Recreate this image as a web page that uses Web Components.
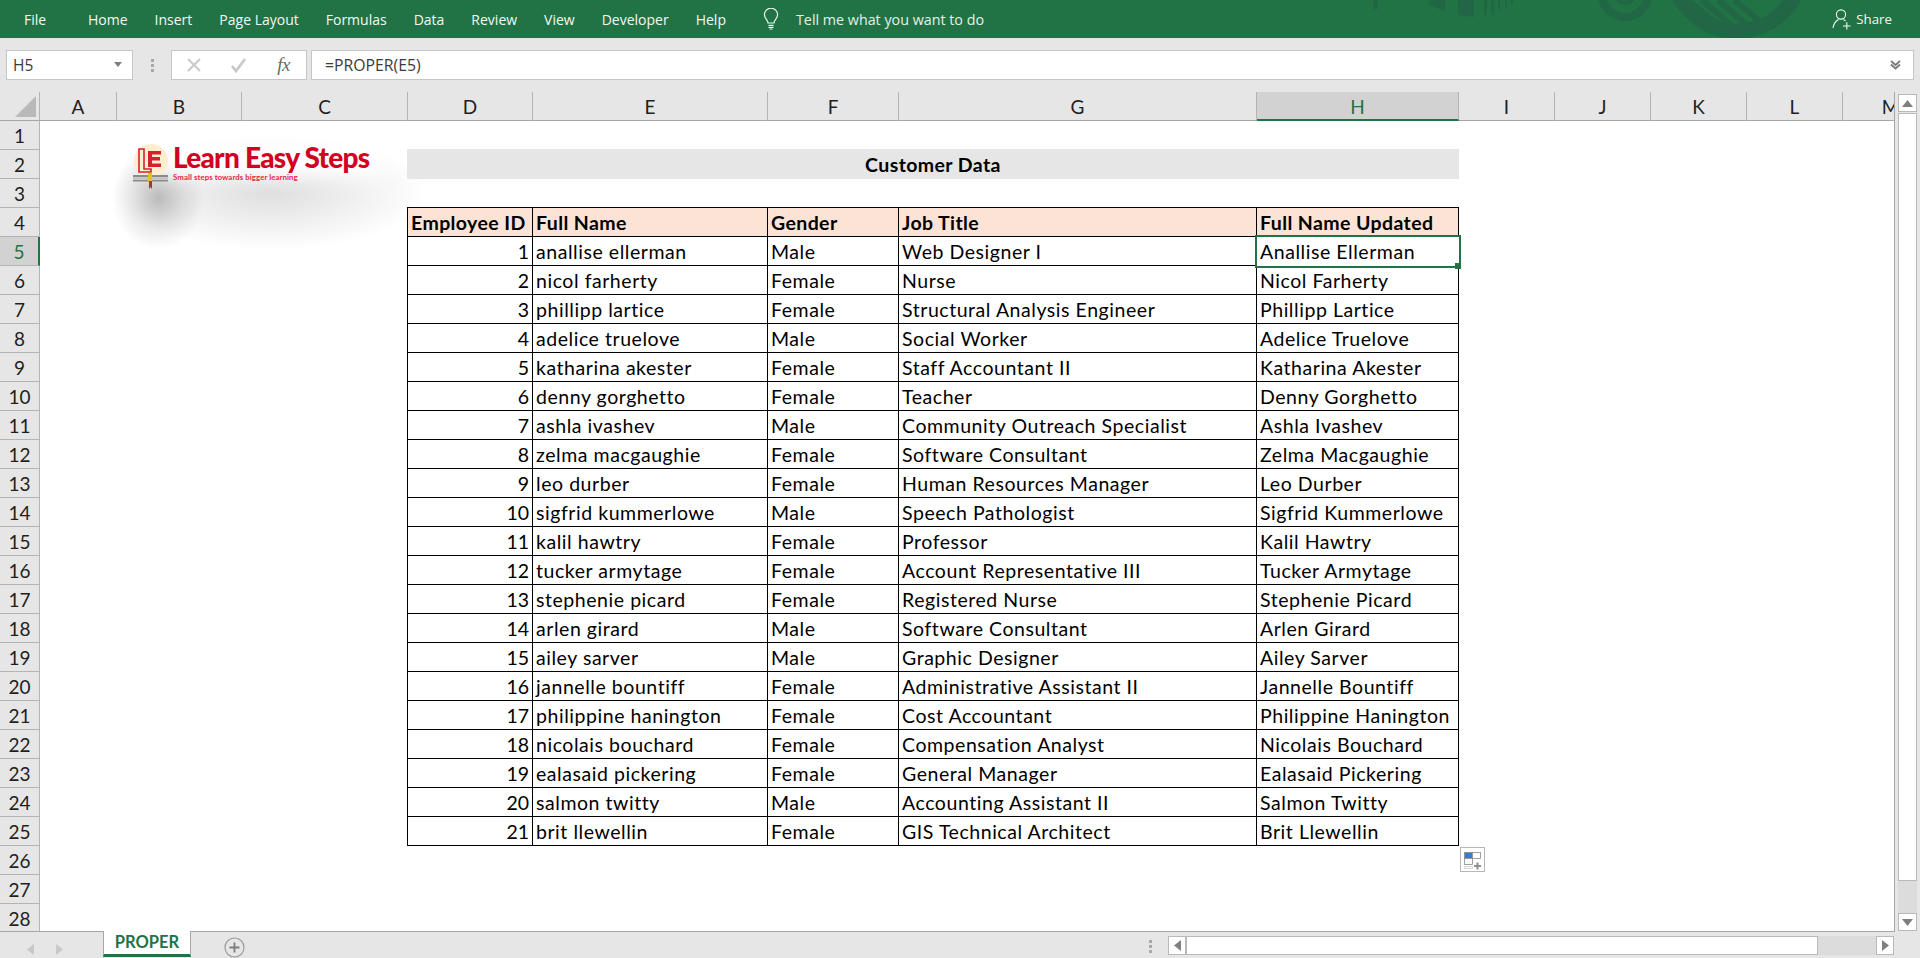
<!DOCTYPE html>
<html lang="en"><head><meta charset="utf-8"><title>PROPER</title>
<style>
html,body{margin:0;padding:0;height:100%;overflow:hidden;background:#e6e6e6}
body{font-family:"Lato","Liberation Sans",sans-serif;font-variant-ligatures:none}
x-app{height:958px}
</style></head><body>
<x-app>
  <x-ribbon slot="ribbon">
    <x-tab>File</x-tab>
    <x-tab slot="tabs">Home</x-tab><x-tab slot="tabs">Insert</x-tab><x-tab slot="tabs">Page Layout</x-tab><x-tab slot="tabs">Formulas</x-tab><x-tab slot="tabs">Data</x-tab><x-tab slot="tabs">Review</x-tab><x-tab slot="tabs">View</x-tab><x-tab slot="tabs">Developer</x-tab><x-tab slot="tabs">Help</x-tab>
  </x-ribbon>
  <x-formula-bar slot="formula" cell="H5" formula="=PROPER(E5)"></x-formula-bar>
  <x-sheet slot="sheet"></x-sheet>
  <x-status slot="status" sheet="PROPER"></x-status>
</x-app>
<script>
const def=(n,html,extra={})=>{
  customElements.define(n,class extends HTMLElement{
    connectedCallback(){
      if(this.shadowRoot)return;
      const r=this.attachShadow({mode:'open'});
      r.innerHTML=typeof html==='function'?html(this):html;
      if(extra.init)extra.init(this,r);
    }
  });
};

def('x-app',`<style>:host{display:flex;flex-direction:column;width:1920px;overflow:hidden}</style>
<slot name="ribbon"></slot><slot name="formula"></slot><slot name="sheet"></slot><slot name="status"></slot>`);

def('x-tab',`<style>:host{display:block;font:14px/37px "Open Sans","Liberation Sans",sans-serif;color:#f4f8f5;white-space:nowrap}</style><slot></slot>`);

def('x-ribbon',`<style>
:host{display:flex;position:relative;height:38px;background:#217346;align-items:center;overflow:hidden;flex:none}
.file{width:88px;padding-left:24px;box-sizing:border-box;flex:none}
.tabs{display:flex;gap:27px;flex:none}
.tell{display:flex;align-items:center;margin-left:37px;font:14.300px/37px "Open Sans",sans-serif;color:#e6efe9}
.tell svg{margin-right:17px;display:block}
.share{margin-left:auto;display:flex;align-items:center;gap:5px;padding-right:28px;font:13.300px/39px "Open Sans",sans-serif;color:#f4f8f5;position:relative}
.deco{position:absolute;left:1340px;top:0;width:500px;height:38px}
</style>
<svg class="deco" viewBox="0 0 500 38" aria-hidden="true">
 <g fill="#216645">
  <rect x="33" y="0" width="5" height="9"/>
  <path d="M89 0h16v11l-16-6z"/>
  <path d="M118 0h16v17l-16-2z"/>
  <rect x="144" y="0" width="3" height="15"/><rect x="151" y="0" width="3" height="13"/><rect x="158" y="0" width="2" height="10"/><rect x="165" y="0" width="2" height="8"/><rect x="171" y="0" width="2" height="4"/>
 </g>
 <circle cx="285" cy="-6" r="23" fill="none" stroke="#216645" stroke-width="8"/>
 <circle cx="285" cy="-6" r="9" fill="none" stroke="#216645" stroke-width="4"/>
 <circle cx="397" cy="-34" r="65" fill="none" stroke="#216645" stroke-width="15"/>
 <g stroke="#216645" stroke-width="6" fill="none">
  <path d="M347 0l34 27M362 0l32 28M378 0l30 26M394 0l28 23"/>
 </g>
</svg>
<div class="file"><slot></slot></div>
<div class="tabs"><slot name="tabs"></slot></div>
<div class="tell">
 <svg width="16" height="22" viewBox="0 0 16 22" fill="none" stroke="#eef4f0" stroke-width="1.2"><path d="M5 15c0-3-3.600-4.400-3.600-8.200A6.600 6.600 0 0 1 14.600 6.800C14.600 10.600 11 12 11 15z"/><path d="M5.500 17.300h5M5.500 19.300h5M6.500 21h3"/></svg>
 <span>Tell me what you want to do</span>
</div>
<div class="share">
 <svg width="19" height="22" viewBox="0 0 19 22" fill="none" stroke="#f2f6f3" stroke-width="1.1"><circle cx="9" cy="6.500" r="4.600"/><path d="M1 20c.6-4.300 2.700-7 5.500-8.500M11.500 11.500c.8.400 1.500 1 2.100 1.600"/><path d="M11 18h7.500M14.800 14.200V21.500"/></svg>
 <span>Share</span>
</div>`);

def('x-formula-bar',h=>`<style>
:host{display:flex;height:54px;box-sizing:border-box;padding:12px 6px 12px 6px;background:#e6e6e6;flex:none}
.box{background:#fff;border:1px solid #c6c6c6;box-sizing:border-box;height:30px;display:flex;align-items:center}
.name{width:127px;padding:0 9px 0 6px;font:15.500px "Open Sans",sans-serif;color:#3c3c3c;justify-content:space-between}
.dots{width:38px;display:flex;flex-direction:column;align-items:center;justify-content:center;gap:2px}
.dots i{width:3px;height:3px;background:#a9a9a9;display:block}
.btns{width:136px;display:grid;grid-template-columns:1fr 1fr 1fr;place-items:center;padding:0;color:#c8c8c8}
.fx{font:italic 19px "Liberation Serif",serif;color:#6a6a6a;letter-spacing:-.5px}
.formula{flex:1;margin-left:4px;padding:0 12px 0 13px;font:15.800px "Open Sans",sans-serif;color:#3c3c3c;justify-content:space-between}
</style>
<div class="box name"><span>${h.getAttribute('cell')}</span><svg width="10" height="6" viewBox="0 0 10 6"><path d="M1 0h8L5 5z" fill="#7e7e7e"/></svg></div>
<div class="dots"><i></i><i></i><i></i></div>
<div class="box btns">
 <svg width="16" height="16" viewBox="0 0 16 16" stroke="#c9c9c9" stroke-width="2" fill="none"><path d="M2 2l12 12M14 2L2 14"/></svg>
 <svg width="17" height="16" viewBox="0 0 17 16" stroke="#c9c9c9" stroke-width="2.800" fill="none"><path d="M2 9l4 5L15 2"/></svg>
 <span class="fx">fx</span>
</div>
<div class="box formula"><span>${h.getAttribute('formula')}</span><svg width="11" height="10" viewBox="0 0 11 10" stroke="#7a7a7a" stroke-width="1.800" fill="none"><path d="M1 1l4.500 4L10 1M1 4.500l4.500 4 4.500-4"/></svg></div>`);

const DATA=[
["anallise ellerman","Male","Web Designer I","Anallise Ellerman"],
["nicol farherty","Female","Nurse","Nicol Farherty"],
["phillipp lartice","Female","Structural Analysis Engineer","Phillipp Lartice"],
["adelice truelove","Male","Social Worker","Adelice Truelove"],
["katharina akester","Female","Staff Accountant II","Katharina Akester"],
["denny gorghetto","Female","Teacher","Denny Gorghetto"],
["ashla ivashev","Male","Community Outreach Specialist","Ashla Ivashev"],
["zelma macgaughie","Female","Software Consultant","Zelma Macgaughie"],
["leo durber","Female","Human Resources Manager","Leo Durber"],
["sigfrid kummerlowe","Male","Speech Pathologist","Sigfrid Kummerlowe"],
["kalil hawtry","Female","Professor","Kalil Hawtry"],
["tucker armytage","Female","Account Representative III","Tucker Armytage"],
["stephenie picard","Female","Registered Nurse","Stephenie Picard"],
["arlen girard","Male","Software Consultant","Arlen Girard"],
["ailey sarver","Male","Graphic Designer","Ailey Sarver"],
["jannelle bountiff","Female","Administrative Assistant II","Jannelle Bountiff"],
["philippine hanington","Female","Cost Accountant","Philippine Hanington"],
["nicolais bouchard","Female","Compensation Analyst","Nicolais Bouchard"],
["ealasaid pickering","Female","General Manager","Ealasaid Pickering"],
["salmon twitty","Male","Accounting Assistant II","Salmon Twitty"],
["brit llewellin","Female","GIS Technical Architect","Brit Llewellin"]];

def('x-col-headers',()=>{
 const cols=[['A',77],['B',125],['C',166],['D',125],['E',235],['F',131],['G',358],['H',202],['I',96],['J',96],['K',96],['L',96],['M',96]];
 return `<style>
:host{display:flex;height:29px;box-sizing:border-box;flex:none;background:#e6e6e6}
.corner{width:40px;flex:none;box-sizing:border-box;border-right:1px solid #b4b4b4;border-bottom:1px solid #a6a6a6;display:flex;align-items:flex-end;justify-content:flex-end;padding:0 3px 3px 0}
.c{flex:none;box-sizing:border-box;border-right:1px solid #b4b4b4;border-bottom:1px solid #a6a6a6;text-align:center;font-size:19px;line-height:30px;color:#1f1f1f}
.sel{background:#d2d2d2;color:#217346;border-bottom:2px solid #217346}
</style><div class="corner"><svg width="21" height="21" viewBox="0 0 21 21"><path d="M21 0v21H0z" fill="#b9b9b9"/></svg></div>`+
 cols.map(([n,w])=>`<div class="c${n==='H'?' sel':''}" style="width:${w}px">${n}</div>`).join('');
});

def('x-row-headers',()=>{
 let s=`<style>
:host{display:block;width:40px;flex:none;background:#e6e6e6}
.r{height:29px;box-sizing:border-box;border-right:1px solid #b4b4b4;border-bottom:1px solid #b4b4b4;text-align:center;font-size:19px;line-height:29px;color:#1f1f1f}
.sel{background:#d2d2d2;color:#217346;border-right:2px solid #217346}
</style>`;
 for(let i=1;i<=28;i++)s+=`<div class="r${i===5?' sel':''}">${i}</div>`;
 return s;
});

def('x-logo',`<style>
:host{position:absolute;left:70px;top:9px;width:320px;height:124px;display:block;pointer-events:none}
.shade{position:absolute;inset:0;background:
 radial-gradient(ellipse 46px 52px at 48px 68px,rgba(0,0,0,.24),rgba(0,0,0,.09) 55%,rgba(0,0,0,0) 100%),
 radial-gradient(ellipse 158px 58px at 160px 62px,rgba(0,0,0,.13),rgba(0,0,0,.06) 55%,rgba(0,0,0,0) 100%)}
.plate{position:absolute;left:46px;top:10px;width:225px;height:36px;background:#fff;filter:blur(9px);opacity:.9}
svg{position:absolute;left:22px;top:13px}
.name{position:absolute;left:63px;top:13px;font:900 28px/28px "Lato",sans-serif;color:#d4001f;letter-spacing:-.75px;white-space:nowrap}
.tag{position:absolute;left:63px;top:42px;font:700 7.800px/11px "Lato",sans-serif;color:#e2274a;letter-spacing:.08px;white-space:nowrap}
</style>
<div class="shade"></div><div class="plate"></div>
<svg width="38" height="48" viewBox="0 0 38 48">
 <circle cx="19" cy="18" r="17" fill="#fbefcf"/>
 <path d="M7 6h5v20h7v3H7z" fill="none" stroke="#d81f2f" stroke-width="1.600"/>
 <path d="M16 8h13v3.500h-9v2.500h8v3.500h-8v3h9V24H16z" fill="#d81f2f"/>
 <rect x="1" y="32" width="35" height="2" fill="#8c8c8c"/><rect x="1" y="34" width="35" height="3" fill="#c6c6c6"/><rect x="1" y="37" width="35" height="1.500" fill="#8b8b8b"/>
 <rect x="16" y="30" width="4" height="9" fill="#e7c21f"/><path d="M17 38h3v8l-1.500-2-1.500 2z" fill="#9a3a32"/>
</svg>
<div class="name">Learn Easy Steps</div><div class="tag">Small steps towards bigger learning</div>`);

def('x-paste-options',`<style>
:host{position:absolute;left:1420px;top:726px;width:25px;height:25px;box-sizing:border-box;border:1px solid #b7b7b7;background:#fff;display:block}
svg{display:block}
</style><svg width="23" height="23" viewBox="0 0 23 23">
<rect x="3.500" y="4.500" width="8" height="6" fill="#3b78e7" stroke="#8a8a8a" stroke-width=".8"/>
<rect x="11.500" y="4.500" width="8" height="6" fill="#fff" stroke="#8a8a8a" stroke-width=".8"/>
<rect x="3.500" y="10.500" width="8" height="6" fill="#fff" stroke="#8a8a8a" stroke-width=".8"/>
<rect x="3.500" y="18.500" width="8" height="2" fill="none" stroke="#8a8a8a" stroke-width=".7" stroke-dasharray="1 1"/>
<path d="M13 18h7M16.500 14.500v7" stroke="#8f8f8f" stroke-width="2"/>
</svg>`);

def('x-data-table',()=>{
 const head=['Employee ID','Full Name','Gender','Job Title','Full Name Updated'];
 let c=head.map(t=>`<div class="cell hd">${t}</div>`).join('');
 DATA.forEach((r,i)=>{
  c+=`<div class="cell num">${i+1}</div>`+r.map((t,j)=>`<div class="cell${i===0&&j===3?' active':''}">${t}</div>`).join('');
 });
 return `<style>
:host{display:grid;grid-template-columns:125px 235px 131px 358px 202px;width:1052px;border-left:1px solid #000;border-top:1px solid #000;box-sizing:border-box}
.cell{height:29px;box-sizing:border-box;border-right:1px solid #000;border-bottom:1px solid #000;padding:0 3px;font-size:19.500px;letter-spacing:.55px;line-height:29.500px;color:#000;white-space:nowrap;position:relative}
.hd{background:#fde3d6;font-weight:700;letter-spacing:.4px}
.num{text-align:right;letter-spacing:0}
.active{outline:2px solid #217346;outline-offset:0;z-index:2;border-color:transparent}
.active::after{content:"";position:absolute;right:-3px;bottom:-4px;width:6px;height:6px;background:#217346}
</style>${c}`;
});

def('x-sheet',`<style>
:host{display:flex;height:839px;background:#e6e6e6;flex:none}
.main{width:1895px;flex:none;overflow:hidden;display:flex;flex-direction:column;box-sizing:border-box;border-right:1px solid #a6a6a6}
.body{display:flex;flex:1;min-height:0}
.canvas{flex:1;background:#fff;position:relative;padding:28px 0 0 367px;overflow:hidden}
.title{position:relative;width:1052px;height:30px;background:#e6e6e6;text-align:center;font-weight:700;font-size:19.500px;letter-spacing:.4px;line-height:32px;color:#000;margin-bottom:28px}
.bar{margin-left:3px;width:19px;padding-top:2px;display:flex;flex-direction:column;box-sizing:border-box;gap:1px}
.btn{height:18px;flex:none;background:#fff;border:1px solid #b9b9b9;box-sizing:border-box;display:flex;align-items:center;justify-content:center}
.thumb{height:768px;flex:none;background:#fff;border:1px solid #b9b9b9;box-sizing:border-box}
.track{flex:1;background:#dcdcdc;margin:-1px 0}
</style>
<div class="main"><x-col-headers></x-col-headers>
 <div class="body"><x-row-headers></x-row-headers>
  <div class="canvas"><x-logo></x-logo><div class="title">Customer Data</div><x-data-table></x-data-table><x-paste-options></x-paste-options></div>
 </div>
</div>
<div class="bar">
 <div class="btn"><svg width="11" height="7" viewBox="0 0 11 7"><path d="M5.500 0l5.500 7H0z" fill="#7f7f7f"/></svg></div>
 <div class="thumb"></div><div class="track"></div>
 <div class="btn"><svg width="11" height="7" viewBox="0 0 11 7"><path d="M5.500 7L11 0H0z" fill="#7f7f7f"/></svg></div>
</div>`);

def('x-status',h=>`<style>
:host{display:flex;height:27px;box-sizing:border-box;background:#e6e6e6;border-top:1px solid #a6a6a6;flex:none;align-items:flex-start;width:1895px}
.nav{width:103px;flex:none;display:flex;align-items:center;gap:22px;padding:12px 0 0 27px;box-sizing:border-box}
.tab{width:88px;height:26px;flex:none;box-sizing:border-box;background:#fff;border-left:1px solid #a6a6a6;border-right:1px solid #a6a6a6;border-bottom:3px solid #217346;margin-top:-1px;text-align:center;font-weight:700;font-size:16.500px;line-height:23px;color:#217346}
.add{margin:5px 0 0 33px;flex:none;display:block}
.dots{margin-left:886px;width:38px;padding-top:8px;display:flex;flex-direction:column;align-items:center;gap:2px;flex:none}
.dots i{width:3px;height:3px;background:#a9a9a9;display:block}
.sb{width:726px;margin-left:-1px;margin-top:4px;height:19px;flex:none;display:flex;background:#dcdcdc;box-sizing:border-box}
.b{width:18px;flex:none;background:#fff;border:1px solid #b9b9b9;box-sizing:border-box;display:flex;align-items:center;justify-content:center}
.th{width:632px;flex:none;background:#fff;border:1px solid #b9b9b9;box-sizing:border-box}
.sp{flex:1}
</style>
<div class="nav"><svg width="7" height="11" viewBox="0 0 7 11"><path d="M0 5.500L7 0v11z" fill="#c8c8c8"/></svg><svg width="7" height="11" viewBox="0 0 7 11"><path d="M7 5.500L0 0v11z" fill="#c8c8c8"/></svg></div>
<div class="tab">${h.getAttribute('sheet')}</div>
<svg class="add" width="21" height="21" viewBox="0 0 21 21" fill="none" stroke="#9c9c9c"><circle cx="10.500" cy="10.500" r="9.500" stroke-width="1.200"/><path d="M5.500 10.500h10M10.500 5.500v10" stroke-width="1.800" stroke="#7d7d7d"/></svg>
<div class="dots"><i></i><i></i><i></i></div>
<div class="sb"><div class="b"><svg width="7" height="11" viewBox="0 0 7 11"><path d="M0 5.500L7 0v11z" fill="#7f7f7f"/></svg></div><div class="th"></div><div class="sp"></div><div class="b"><svg width="7" height="11" viewBox="0 0 7 11"><path d="M7 5.500L0 0v11z" fill="#7f7f7f"/></svg></div></div>`);
</script>
</body></html>
